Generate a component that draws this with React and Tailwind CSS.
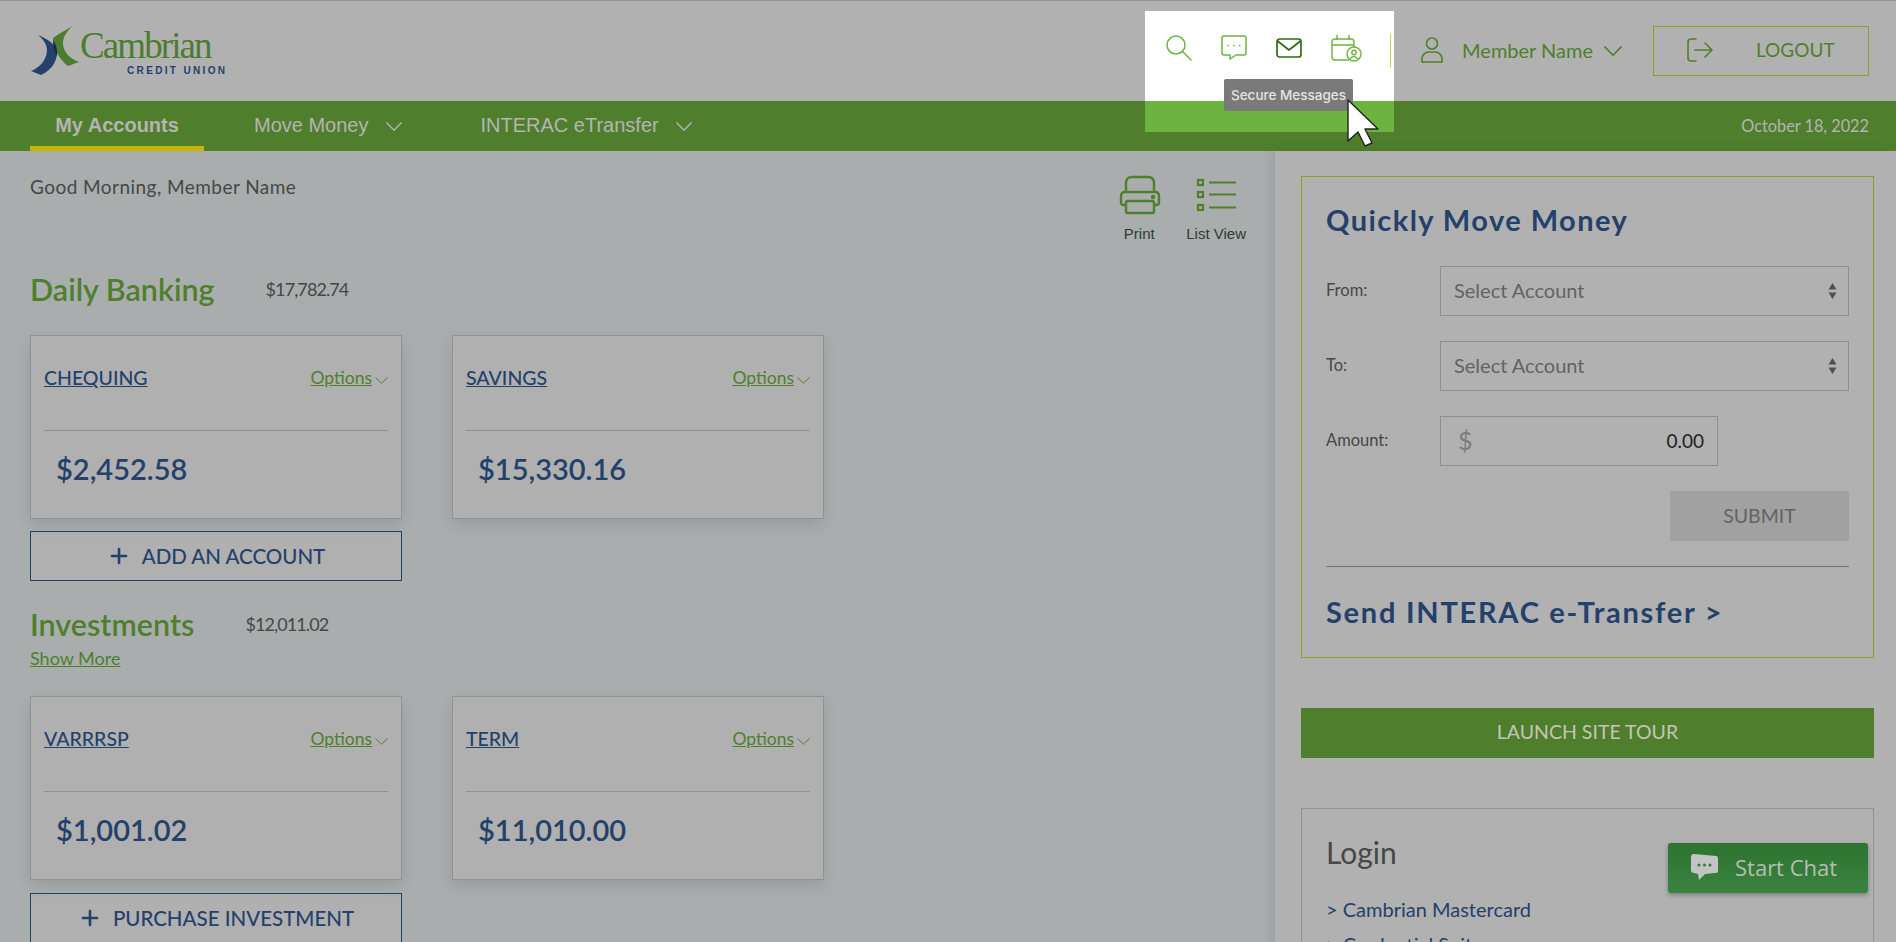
import React from 'react';
import { Plus } from 'lucide-react';

const sans = "font-['Lato','Open_Sans',sans-serif]";

const Chevron = ({ w = 16, h = 9, className = '', strokeWidth = 1.4 }) => (
  <svg className={className} width={w} height={h} viewBox={`0 0 ${w} ${h}`} fill="none" stroke="currentColor" strokeWidth={strokeWidth}>
    <path d={`M0.5 0.5 L${w / 2} ${h - 0.8} L${w - 0.5} 0.5`} />
  </svg>
);

const Logo = () => (
  <div className="relative w-[200px] h-[60px]">
    <svg className="absolute left-0 top-0" width="52" height="58" viewBox="0 0 52 58">
      <path d="M43 5 C36 9 28 13 23 17 C23 27 29 38 38 45 L49 41 C41 38 33 32 33 22 C33 15 38 9 43 5 Z" fill="#4c7d2e" />
      <path d="M8 14 C17 18 26 23 27 31 C27 42 20 50 11 54 L1 50 C9 47 17 39 17 29 C17 23 13 18 8 14 Z" fill="#23416b" />
      <path d="M23 19 C25 22 27 26 27 31 L27 36 C25 31 23 25 23 19 Z" fill="#12294a" />
    </svg>
    <span className="absolute left-[50px] top-[5px] font-['Liberation_Serif',serif] text-[37px] leading-[40px] tracking-[-1.9px] text-[#4c7d2e]">Cambrian</span>
    <span className="absolute left-[97px] top-[44px] font-['Liberation_Sans',sans-serif] text-[10px] leading-[12px] font-bold tracking-[2.35px] text-[#23416b] whitespace-nowrap">CREDIT UNION</span>
  </div>
);

const Card = ({ name, balance }) => (
  <div className="w-[372px] h-[184px] bg-[#b0b0b0] border border-[#909396] shadow-[0_6px_14px_rgba(0,0,0,0.1)] px-[13px] flex flex-col">
    <div className="h-[95px] flex items-center justify-between border-b border-[#8f9194] pb-[10px]">
      <a className="text-[19.5px] text-[#23416b] underline font-medium">{name}</a>
      <span className="flex items-center gap-[3px] mt-[1px] text-[17.5px] text-[#4f7f2c] underline">
        Options <Chevron w={13} h={7} strokeWidth={1} className="mt-[3px]" />
      </span>
    </div>
    <div className="pl-[12px] pt-[18px] text-[29px] leading-[40px] font-semibold text-[#23416b]">{balance}</div>
  </div>
);

const WideButton = ({ children }) => (
  <button className="w-[372px] h-[50px] border border-[#23416b] flex items-center justify-center gap-[11px] text-[20.5px] font-medium text-[#23416b] bg-[#b0b0b0]">
    <Plus className="w-[24px] h-[24px]" strokeWidth={2.6} />
    {children}
  </button>
);

const SelectBox = () => (
  <div className="flex-1 h-[50px] border border-[#8f8f8f] flex items-center justify-between pl-[13px] pr-[11px] text-[20px] text-[#636363]">
    <span className="pb-[2px]">Select Account</span>
    <svg width="9" height="16" viewBox="0 0 9 16"><path d="M4.5 0 L8.5 6.5 H0.5 Z M0.5 9.5 H8.5 L4.5 16 Z" fill="#505050" /></svg>
  </div>
);

const Row = ({ label, children, className = '' }) => (
  <div className={`flex items-center ${className}`}>
    <span className="w-[114px] pb-[2px] text-[16.5px] text-[#474747]">{label}</span>
    {children}
  </div>
);

const SectionTitle = ({ title, total }) => (
  <div className="flex items-center h-[40px]">
    <h2 className="pb-[3px] text-[30.5px] leading-[40px] font-semibold text-[#4f7f2c]">{title}</h2>
    <span className="ml-[51px] pb-[2px] text-[18px] tracking-[-0.9px] text-[#474747]">{total}</span>
  </div>
);

export default function App() {
  return (
    <div className={`relative h-[942px] w-[1896px] overflow-hidden bg-[#a9adad] ${sans}`}>
      {/* header */}
      <header className="h-[101px] bg-[#b1b1b1] border-t border-[#949494] flex items-center pl-[30px] pr-[27px]">
        <Logo />
        <div className="ml-auto flex items-center">
          <div className="w-[1px] h-[32px] bg-[#c8d64a] mr-[30px]" />
          <svg className="mb-[2px]" width="22" height="26" viewBox="0 0 22 26" fill="none" stroke="#4f7f2c" strokeWidth="1.6">
            <circle cx="11" cy="6.5" r="5.5" />
            <path d="M1 25 V22 C1 17.5 4.5 15 8 15 H14 C17.5 15 21 17.5 21 22 V25 Z" />
          </svg>
          <span className="ml-[19px] mb-[2px] text-[20px] text-[#4f7f2c]">Member Name</span>
          <Chevron w={18} h={10} strokeWidth={1.6} className="ml-[11px] text-[#4f7f2c]" />
          <button className="ml-[31px] w-[216px] h-[50px] border border-[#8ca020] flex items-center pl-[33px] pb-[2px] text-[19px] text-[#4f7f2c]">
            <svg width="26" height="24" viewBox="0 0 26 24" fill="none" stroke="#4f7f2c" strokeWidth="1.6" strokeLinecap="round" strokeLinejoin="round">
              <path d="M9 1 H4 Q1 1 1 4 V20 Q1 23 4 23 H9" />
              <path d="M8 12 H25 M18 5 L25 12 L18 19" />
            </svg>
            <span className="ml-[43px]">LOGOUT</span>
          </button>
        </div>
      </header>

      {/* nav */}
      <nav className="h-[50px] bg-[#4f7f2c] flex items-stretch pl-[30px] pr-[27px] font-['Liberation_Sans',sans-serif] text-[20px] text-[#b4b4b4]">
        <a className="w-[174px] flex items-center justify-center font-bold border-b-[5px] border-[#c6b400] pt-[3px]">My Accounts</a>
        <a className="ml-[50px] flex items-center pb-[2px]">Move Money<Chevron className="ml-[17px] mt-[3px]" /></a>
        <a className="ml-[79px] flex items-center pb-[2px]">INTERAC eTransfer<Chevron className="ml-[17px] mt-[3px]" /></a>
        <span className={`ml-auto flex items-center text-[16.3px] ${sans}`}>October 18, 2022</span>
      </nav>

      <div className="flex">
        {/* accounts column */}
        <main className="w-[1275px] px-[30px] relative">
          <p className="pt-[24px] text-[19px] leading-[24px] tracking-[0.45px] text-[#474747]">Good Morning, Member Name</p>
          <div className="absolute right-[29px] top-[24px] flex gap-[25px] font-['Liberation_Sans',sans-serif] text-[15px] text-[#2c3e2c]">
            <div className="flex flex-col items-center gap-[8px]">
              <svg className="ml-[2px]" width="42" height="40" viewBox="0 0 42 40" fill="none" stroke="#4f7f2c" strokeWidth="2.4" strokeLinejoin="round">
                <path d="M7 17 V8 Q7 2 13 2 H29 Q35 2 35 8 V17" />
                <path d="M7 30 H5 Q2 30 2 27 V21 Q2 17 6 17 H36 Q40 17 40 21 V27 Q40 30 37 30 H35" />
                <rect x="7" y="26" width="28" height="12" rx="2" />
                <circle cx="34" cy="22" r="1" />
              </svg>
              Print
            </div>
            <div className="flex flex-col items-center gap-[8px]">
              <svg width="42" height="40" viewBox="0 0 42 40" fill="none" stroke="#4f7f2c" strokeWidth="2.2">
                <rect x="3" y="5" width="5" height="5" /><rect x="3" y="17" width="5" height="5" /><rect x="3" y="30" width="5" height="5" />
                <path d="M14 7.5 H41 M14 19.5 H41 M14 32.5 H41" />
              </svg>
              List View
            </div>
          </div>

          <div className="mt-[71px]"><SectionTitle title="Daily Banking" total="$17,782.74" /></div>
          <div className="mt-[25px] flex gap-[50px]">
            <Card name="CHEQUING" balance="$2,452.58" />
            <Card name="SAVINGS" balance="$15,330.16" />
          </div>
          <div className="mt-[12px]"><WideButton>ADD AN ACCOUNT</WideButton></div>

          <div className="mt-[24px]"><SectionTitle title="Investments" total="$12,011.02" /></div>
          <a className="block mt-[1px] text-[18px] leading-[24px] text-[#4f7f2c] underline">Show More</a>
          <div className="mt-[26px] flex gap-[50px]">
            <Card name="VARRRSP" balance="$1,001.02" />
            <Card name="TERM" balance="$11,010.00" />
          </div>
          <div className="mt-[13px]"><WideButton>PURCHASE INVESTMENT</WideButton></div>
        </main>

        {/* side column */}
        <aside className="flex-1 bg-[#b1b1b1] pl-[26px] pr-[22px] pt-[25px] shadow-[-4px_0_10px_rgba(0,0,0,0.08)]">
          <section className="h-[482px] border border-[#8ca020] px-[24px] pt-[23px]">
            <h3 className="text-[29px] leading-[40px] font-bold tracking-[1.45px] text-[#23416b]">Quickly Move Money</h3>
            <Row className="mt-[26px]" label="From:"><SelectBox /></Row>
            <Row className="mt-[25px]" label="To:"><SelectBox /></Row>
            <Row className="mt-[25px]" label="Amount:">
              <div className="w-[278px] h-[50px] border border-[#8f8f8f] flex items-center justify-between pl-[17px] pr-[13px] text-[19px]">
                <span className="text-[#7c7c7c] text-[25px]">$</span>
                <span className="text-[#222]">0.00</span>
              </div>
            </Row>
            <div className="mt-[25px] flex justify-end">
              <button className="w-[179px] h-[50px] bg-[#a1a1a1] text-[19.5px] text-[#636363]">SUBMIT</button>
            </div>
            <div className="mt-[25px] border-t border-[#6c7073]" />
            <div className="mt-[25px] text-[29px] leading-[40px] font-bold tracking-[1.75px] text-[#23416b]">Send INTERAC e-Transfer &gt;</div>
          </section>
          <button className="mt-[50px] w-full h-[50px] bg-[#4f7f2c] pb-[3px] text-[19.5px] text-[#c3c7b4]">LAUNCH SITE TOUR</button>
          <section className="mt-[50px] h-[300px] border border-[#8f9194] px-[24px] pt-[23px]">
            <h3 className="text-[30px] leading-[40px] text-[#474747]">Login</h3>
            <ul className="mt-[20px] text-[20px] leading-[35px] text-[#23416b]">
              <li>&gt; Cambrian Mastercard</li>
              <li>&gt; Credential Suite</li>
            </ul>
          </section>
        </aside>
      </div>

      {/* spotlight on the toolbar being toured */}
      <div className="absolute left-[1145px] top-[11px] w-[249px] h-[121px] overflow-hidden bg-white">
        <div className="absolute left-0 right-0 top-[90px] bottom-0 bg-[#6db33f]" />
        <svg className="absolute left-[21px] top-[24px]" width="26" height="26" viewBox="0 0 26 26" fill="none" stroke="#6db33f" strokeWidth="1.5" strokeLinecap="round">
          <circle cx="10" cy="10" r="9" /><path d="M17 17 L25 25" />
        </svg>
        <svg className="absolute left-[76px] top-[24px]" width="26" height="26" viewBox="0 0 26 26" fill="none" stroke="#6db33f" strokeWidth="1.5" strokeLinejoin="round">
          <path d="M3 1 H23 Q25 1 25 3 V18 Q25 20 23 20 H15 L9 24 V20 H3 Q1 20 1 18 V3 Q1 1 3 1 Z" />
          <path d="M6.5 10.5 H8 M12.2 10.5 H13.8 M18 10.5 H19.5" />
        </svg>
        <svg className="absolute left-[131px] top-[27px]" width="26" height="20" viewBox="0 0 26 20" fill="none" stroke="#2f6a12" strokeWidth="1.7" strokeLinejoin="round">
          <rect x="1" y="1" width="24" height="18" rx="2.5" /><path d="M1.5 3 L13 12 L24.5 3" />
        </svg>
        <svg className="absolute left-[186px] top-[23px]" width="32" height="28" viewBox="0 0 32 28" fill="none" stroke="#6db33f" strokeWidth="1.4">
          <path d="M18 26 H4 Q1 26 1 23 V8 Q1 5 4 5 H20 Q23 5 23 8 V13" />
          <path d="M1 11 H23 M6 1 V6 M18 1 V6" />
          <circle cx="23" cy="20" r="7" /><circle cx="23" cy="18.5" r="2.2" /><path d="M19 25 Q23 20 27 25" />
        </svg>
        <div className="absolute left-[245px] top-[23px] w-[1px] h-[34px] bg-[#c8d64a]" />
      </div>

      {/* tooltip */}
      <div className="absolute left-[1224px] top-[79px] w-[129px] h-[32px] rounded-[2px] bg-[#7a7a7a] flex items-center justify-center text-[13.5px] font-medium font-['Inter',sans-serif] text-[#e4e4e4]">
        Secure Messages
      </div>

      {/* cursor */}
      <svg className="absolute left-[1347px] top-[99px]" width="34" height="50" viewBox="0 0 34 50">
        <path d="M1 1 V42 L11 33 L18 47 L25 44 L18 30 L31 30 Z" fill="#fff" stroke="#222" strokeWidth="1.4" strokeLinejoin="round" />
      </svg>

      {/* chat button */}
      <div className="absolute left-[1668px] top-[843px] w-[200px] h-[50px] rounded-[3px] bg-gradient-to-b from-[#2c732f] to-[#3b8341] shadow-[0_2px_4px_rgba(0,0,0,0.3)] flex items-center pl-[22px] pb-[2px] font-['Open_Sans',sans-serif] text-[22px] text-[#b9bdb5]">
        <svg width="29" height="28" viewBox="0 0 29 28">
          <path d="M4 1 L26 3 Q28 3 28 6 V18 Q28 20 25 20 L15 21 L9 27 L8 21 L4 20 Q1 20 1 17 V4 Q1 1 4 1 Z" fill="#c4c4c4" />
          <circle cx="9" cy="12" r="1.6" fill="#35803a" /><circle cx="14.5" cy="12" r="1.6" fill="#35803a" /><circle cx="20" cy="12" r="1.6" fill="#35803a" />
        </svg>
        <span className="ml-[16px]">Start Chat</span>
      </div>
    </div>
  );
}
